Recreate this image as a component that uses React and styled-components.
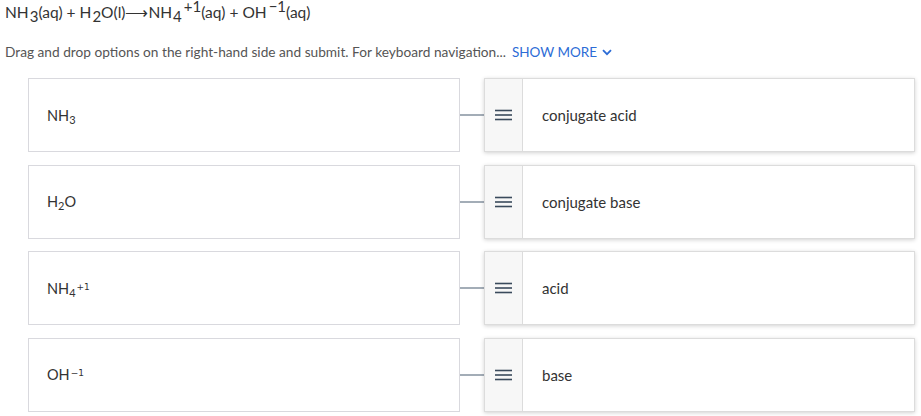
import styled, { createGlobalStyle } from "styled-components";

const GlobalStyle = createGlobalStyle`
  body {
    margin: 0;
    background: #fff;
    font-family: Lato, "Open Sans", sans-serif;
    color: #333;
  }
`;

const SPage = styled.div`
  width: 921px;
  height: 416px;
  overflow: hidden;
  padding: 0 0 0 5px;
  box-sizing: border-box;
`;

const SEquation = styled.div`
  font-size: 15.5px;
  line-height: 20px;
  padding-top: 2px;
  color: #333;
  sub {
    font-size: 15px;
    vertical-align: baseline;
    position: relative;
    top: 4px;
    margin-left: 1px;
  }
  sup {
    font-size: 15px;
    vertical-align: baseline;
    position: relative;
    top: -6px;
    margin-left: 2px;
  }
`;

const SHint = styled.div`
  margin-top: 21px;
  font-size: 13.7px;
  line-height: 18px;
  color: #555;
  display: flex;
  align-items: center;
  gap: 6px;
`;

const SShowMore = styled.button`
  border: 0;
  background: none;
  padding: 0;
  font: inherit;
  font-size: 13.5px;
  color: #2c6cd6;
  display: inline-flex;
  align-items: center;
  gap: 5px;
  cursor: pointer;
`;

const SList = styled.div`
  margin-top: 17px;
  padding-left: 23px;
  display: flex;
  flex-direction: column;
  gap: 12.67px;
`;

const SRow = styled.div`
  display: flex;
  align-items: center;
  height: 74px;
`;

const STarget = styled.div`
  width: 432px;
  height: 100%;
  box-sizing: border-box;
  border: 1px solid #d9d9de;
  display: flex;
  align-items: center;
  padding-left: 18px;
  font-size: 14.5px;
  color: #333;
  sub {
    font-size: 11px;
    vertical-align: baseline;
    position: relative;
    top: 3px;
  }
  sup {
    font-family: "DejaVu Sans", sans-serif;
    font-size: 9px;
    vertical-align: baseline;
    position: relative;
    top: -4px;
    margin-left: 1px;
  }
`;

const SConnector = styled.div`
  width: 24px;
  height: 2px;
  background: #a3adb7;
`;

const SCard = styled.div`
  width: 431px;
  height: 100%;
  box-sizing: border-box;
  display: flex;
  border: 1px solid #dcdcdc;
  box-shadow: 0 1px 4px rgba(0, 0, 0, 0.18);
  background: #fff;
`;

const SHandle = styled.div`
  width: 37px;
  background: #f7f7f7;
  border-right: 1px solid #dcdcdc;
  display: flex;
  align-items: center;
  justify-content: center;
`;

const SLabel = styled.div`
  display: flex;
  align-items: center;
  padding-left: 19px;
  font-size: 15px;
  color: #333;
`;

const HandleIcon = () => (
  <svg width="17" height="12" viewBox="0 0 17 12">
    <g stroke="#3a4a5c" strokeWidth="1.6">
      <line x1="0" y1="1.5" x2="17" y2="1.5" />
      <line x1="0" y1="6" x2="17" y2="6" />
      <line x1="0" y1="10.5" x2="17" y2="10.5" />
    </g>
  </svg>
);

const Chevron = () => (
  <svg width="10" height="7" viewBox="0 0 10 7">
    <path d="M1 1.2 L5 5.2 L9 1.2" fill="none" stroke="#2c6cd6" strokeWidth="1.8" />
  </svg>
);

const rows = [
  { target: <>NH<sub>3</sub></>, label: "conjugate acid" },
  { target: <>H<sub>2</sub>O</>, label: "conjugate base" },
  { target: <>NH<sub>4</sub><sup>+1</sup></>, label: "acid" },
  { target: <>OH<sup>−1</sup></>, label: "base" },
];

export default function App() {
  return (
    <>
      <GlobalStyle />
      <SPage>
        <SEquation>
          NH<sub>3</sub>(aq) + H<sub>2</sub>O(l)⟶NH<sub>4</sub>
          <sup>+1</sup>(aq) + OH<sup>−1</sup>(aq)
        </SEquation>
        <SHint>
          Drag and drop options on the right-hand side and submit. For keyboard navigation...
          <SShowMore>
            SHOW MORE <Chevron />
          </SShowMore>
        </SHint>
        <SList>
          {rows.map((r, i) => (
            <SRow key={i}>
              <STarget>
                <span>{r.target}</span>
              </STarget>
              <SConnector />
              <SCard>
                <SHandle>
                  <HandleIcon />
                </SHandle>
                <SLabel>{r.label}</SLabel>
              </SCard>
            </SRow>
          ))}
        </SList>
      </SPage>
    </>
  );
}
